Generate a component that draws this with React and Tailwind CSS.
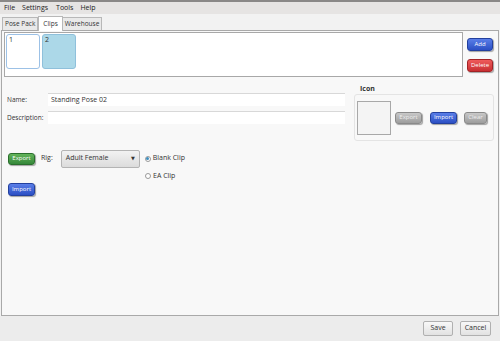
import React from 'react';

const font = { fontFamily: '"Open Sans", "DejaVu Sans", sans-serif' };

function GlossBtn({ color, children, className = '' }) {
    const colors = {
        blue: 'bg-gradient-to-b from-[#5a7ee8] to-[#2c4fc4] border-[#23409e] text-white',
        red: 'bg-gradient-to-b from-[#ee5a5a] to-[#c92f33] border-[#a22326] text-white',
        green: 'bg-gradient-to-b from-[#63b45a] to-[#35883a] border-[#2a6e2d] text-white',
        gray: 'bg-gradient-to-b from-[#c8c8c8] to-[#9d9d9d] border-[#8a8a8a] text-[#eeeeee]',
    };
    return (
        <div className={`flex items-center justify-center rounded-[3px] border text-[6px] shadow-[1px_1px_1px_rgba(0,0,0,0.35)] ${colors[color]} ${className}`}>
            {children}
        </div>
    );
}

export default function App() {
    return (
        <div style={font} className="w-[500px] h-[341px] bg-[#f2f2f2] flex flex-col text-[#333] overflow-hidden">
            {/* menu bar */}
            <div className="h-[14px] bg-[#e6e4e3] border-t-[2px] border-[#8a8887] flex items-center text-[7px] text-[#222]">
                <span className="ml-[4px]">File</span>
                <span className="ml-[7px]">Settings</span>
                <span className="ml-[8px]">Tools</span>
                <span className="ml-[7px]">Help</span>
            </div>

            {/* tabs */}
            <div className="h-[16px] flex items-end pl-[2px] bg-[#f2f2f2]">
                <div className="h-[13px] px-[2px] border border-b-0 border-[#b8b8b8] bg-[#e9e9e9] text-[6.5px] flex items-center">Pose Pack</div>
                <div className="h-[15px] px-[4px] border border-b-0 border-[#b8b8b8] bg-white text-[6.5px] flex items-center -mb-px relative z-10">Clips</div>
                <div className="h-[13px] px-[2px] border border-b-0 border-l-0 border-[#b8b8b8] bg-[#e9e9e9] text-[6.5px] flex items-center">Warehouse</div>
            </div>

            {/* panel */}
            <div className="flex-1 mx-[1px] border border-[#a9a9a9] bg-[#f8f8f8] flex flex-col">
                <div className="flex mt-[1px]">
                    <div className="ml-[2px] w-[459px] h-[45px] bg-white border border-[#a8a8a8] flex gap-[2px] p-px">
                        <div className="w-[34px] h-[35px] rounded-[3px] border border-[#9cc1e6] bg-white text-[7px] pl-[2px] leading-[10px]">1</div>
                        <div className="w-[34px] h-[35px] rounded-[3px] border border-[#8fc0db] bg-[#acd8e8] text-[7px] pl-[2px] leading-[10px]">2</div>
                    </div>
                    <div className="ml-[4px] flex flex-col gap-[8px] pt-[6px]">
                        <GlossBtn color="blue" className="w-[26px] h-[13px]">Add</GlossBtn>
                        <GlossBtn color="red" className="w-[26px] h-[13px]">Delete</GlossBtn>
                    </div>
                </div>

                <div className="flex mt-[7px]">
                    <div className="w-[346px] pt-[9px]">
                        <div className="flex items-center h-[13px]">
                            <span className="w-[46px] pl-[5px] text-[6.5px]">Name:</span>
                            <div className="w-[297px] h-[13px] bg-white border-t border-[#d8d8d8] text-[7px] flex items-center pl-[3px]">Standing Pose 02</div>
                        </div>
                        <div className="flex items-center h-[13px] mt-[5px]">
                            <span className="w-[46px] pl-[5px] text-[6.5px]">Description:</span>
                            <div className="w-[297px] h-[13px] bg-white border-t border-[#d8d8d8]"></div>
                        </div>
                    </div>
                    <div className="ml-[6px] w-[140px]">
                        <div className="text-[7px] font-bold pl-[6px] h-[10px] leading-[10px]">Icon</div>
                        <div className="h-[47px] border border-[#e4e4e4] rounded-[3px] flex items-center pl-[2px]">
                            <div className="w-[34px] h-[34px] bg-[#f4f4f4] border border-[#a8a8a8]"></div>
                            <GlossBtn color="gray" className="ml-[4px] w-[27px] h-[12px]">Export</GlossBtn>
                            <GlossBtn color="blue" className="ml-[8px] w-[27px] h-[12px]">Import</GlossBtn>
                            <GlossBtn color="gray" className="ml-[7px] w-[23px] h-[12px]">Clear</GlossBtn>
                        </div>
                    </div>
                </div>

                <div className="flex mt-[8px] pl-[6px]">
                    <div className="flex flex-col">
                        <div className="flex items-center h-[19px]">
                            <GlossBtn color="green" className="w-[27px] h-[12px]">Export</GlossBtn>
                            <span className="ml-[6px] text-[7px] text-[#333]">Rig:</span>
                            <div className="ml-[8px] w-[79px] h-[18px] rounded-[2px] border border-[#b4b4b4] bg-gradient-to-b from-[#f2f2f2] to-[#dcdcdc] flex items-center justify-between px-[4px] text-[7px]">
                                <span>Adult Female</span>
                                <span className="text-[5px]">▼</span>
                            </div>
                            <div className="ml-[5px] flex items-center text-[7px]">
                                <span className="w-[6px] h-[6px] rounded-full border border-[#999] bg-white flex items-center justify-center">
                                    <span className="w-[3px] h-[3px] rounded-full bg-[#3d8fc0]"></span>
                                </span>
                                <span className="ml-[2px]">Blank Clip</span>
                            </div>
                        </div>
                        <div className="flex items-center h-[10px] mt-[3px] ml-[137px] text-[7px]">
                            <span className="w-[6px] h-[6px] rounded-full border border-[#999] bg-white"></span>
                            <span className="ml-[2px]">EA Clip</span>
                        </div>
                        <GlossBtn color="blue" className="mt-[2px] w-[27px] h-[13px]">Import</GlossBtn>
                    </div>
                </div>
            </div>

            {/* bottom bar */}
            <div className="h-[25px] bg-[#ececec] flex items-center justify-end gap-[7px] pr-[9px]">
                <div className="w-[30px] h-[15px] border border-[#b0b0b0] bg-gradient-to-b from-[#f8f8f8] to-[#e2e2e2] rounded-[2px] text-[7px] flex items-center justify-center">Save</div>
                <div className="w-[31px] h-[15px] border border-[#b0b0b0] bg-gradient-to-b from-[#f8f8f8] to-[#e2e2e2] rounded-[2px] text-[7px] flex items-center justify-center">Cancel</div>
            </div>
        </div>
    );
}
